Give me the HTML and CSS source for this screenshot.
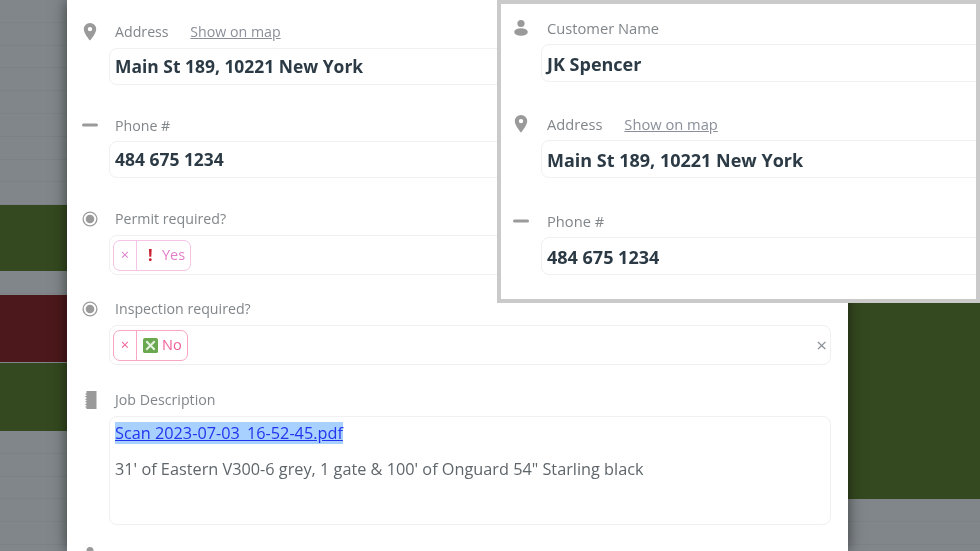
FILE: index.html
```html
<!DOCTYPE html>
<html lang="en">
<head>
<meta charset="utf-8">
<title>Job details</title>
<link rel="stylesheet" href="styles.css">
</head>
<body>
<div class="stage">
  <div class="backdrop">
    <div class="col col-left">
      <div class="stripes s205"></div>
      <div class="band green h66"></div>
      <div class="stripes h24"></div>
      <div class="band red h67"></div>
      <div class="gap1"></div>
      <div class="band green h68"></div>
      <div class="stripes grow"></div>
    </div>
    <div class="col col-right">
      <div class="stripes s205"></div>
      <div class="band green h294"></div>
      <div class="stripes grow"></div>
    </div>
  </div>

  <section class="modal">
    <div class="field f-address">
      <svg class="icon" viewBox="0 0 16 20"><path fill-rule="evenodd" d="M8 1a6.2 6.2 0 0 0-6.2 6.2C1.800 11.500 8 18.500 8 18.500s6.200-7 6.200-11.300A6.200 6.200 0 0 0 8 1zm0 8.300a2.200 2.200 0 1 1 0-4.400 2.200 2.200 0 0 1 0 4.400z"/></svg>
      <div class="body">
        <div class="label">Address <a class="maplink">Show on map</a></div>
        <div class="box value">Main St 189, 10221 New York</div>
      </div>
    </div>
    <div class="field f-phone">
      <svg class="icon" viewBox="0 0 16 20"><rect x="0" y="8.500" width="16" height="3" rx="1.500"/></svg>
      <div class="body">
        <div class="label">Phone #</div>
        <div class="box value">484 675 1234</div>
      </div>
    </div>
    <div class="field f-permit">
      <svg class="icon" viewBox="0 0 16 16"><circle cx="8" cy="8" r="6.900" fill="none" stroke="#9a9a9a" stroke-width="1.300"/><circle cx="8" cy="8" r="4.300"/></svg>
      <div class="body">
        <div class="label">Permit required?</div>
        <div class="box tagbox">
          <span class="tag tag-yes"><span class="tag-x">×</span><span class="tag-text"><b class="bang">!</b>Yes</span></span>
        </div>
      </div>
    </div>
    <div class="field f-inspect">
      <svg class="icon" viewBox="0 0 16 16"><circle cx="8" cy="8" r="6.900" fill="none" stroke="#9a9a9a" stroke-width="1.300"/><circle cx="8" cy="8" r="4.300"/></svg>
      <div class="body">
        <div class="label">Inspection required?</div>
        <div class="box tagbox">
          <span class="tag tag-no"><span class="tag-x">×</span><span class="tag-text"><svg class="nomark" viewBox="0 0 16 16"><rect width="16" height="16" rx="2" fill="#6aa84f"/><path d="M3.500 3.500l9 9M12.500 3.500l-9 9" stroke="#e8f2e2" stroke-width="2.200"/></svg>No</span></span>
          <span class="clear">×</span>
        </div>
      </div>
    </div>
    <div class="field f-desc">
      <svg class="icon icon-desc" viewBox="0 0 12 18"><path d="M2 0h10v18H2v-1.200L.3 16 2 15.200v-1L.3 13.400 2 12.600v-1L.3 10.800 2 10V9L.3 8.200 2 7.400v-1L.3 5.600 2 4.800v-1L.3 3 2 2.200z"/></svg>
      <div class="body">
        <div class="label">Job Description</div>
        <div class="box descbox">
          <p class="scan"><a class="scanlink">Scan 2023-07-03_16-52-45.pdf</a></p>
          <p class="desc">31' of Eastern V300-6 grey, 1 gate &amp; 100' of Onguard 54" Starling black</p>
        </div>
      </div>
    </div>
    <svg class="icon icon-next" viewBox="0 0 16 20"><path d="M8 1a3.500 3.500 0 0 0-3.500 3.500V7h7V4.500A3.500 3.500 0 0 0 8 1z"/></svg>
  </section>

  <aside class="inset">
    <div class="ifield if-name">
      <svg class="icon" viewBox="0 0 16 18"><circle cx="8" cy="4.500" r="3.600"/><ellipse cx="8" cy="13" rx="6.800" ry="3.800"/></svg>
      <div class="body">
        <div class="label">Customer Name</div>
        <div class="box value">JK Spencer</div>
      </div>
    </div>
    <div class="ifield if-address">
      <svg class="icon" viewBox="0 0 16 20"><path fill-rule="evenodd" d="M8 1a6.200 6.200 0 0 0-6.200 6.200C1.800 11.500 8 18.500 8 18.500s6.200-7 6.200-11.300A6.200 6.200 0 0 0 8 1zm0 8.300a2.200 2.200 0 1 1 0-4.400 2.200 2.200 0 0 1 0 4.400z"/></svg>
      <div class="body">
        <div class="label">Address <a class="maplink">Show on map</a></div>
        <div class="box value">Main St 189, 10221 New York</div>
      </div>
    </div>
    <div class="ifield if-phone">
      <svg class="icon" viewBox="0 0 16 20"><rect x="0" y="8.500" width="16" height="3" rx="1.500"/></svg>
      <div class="body">
        <div class="label">Phone #</div>
        <div class="box value">484 675 1234</div>
      </div>
    </div>
  </aside>
</div>
</body>
</html>
```
FILE: styles.css
```css
* { box-sizing: border-box; }
html, body { margin: 0; padding: 0; }
body { width: 980px; height: 551px; overflow: hidden; background: #fff; font-family: "Open Sans", sans-serif; }
.stage { position: relative; width: 980px; height: 551px; overflow: hidden; filter: blur(0.45px); }

/* Dimmed table behind the modal */
.backdrop { display: flex; justify-content: space-between; height: 551px; background: #80868a; }
.col { display: flex; flex-direction: column; height: 551px; }
.col-left { width: 67px; }
.col-right { width: 132px; }
.stripes { background: repeating-linear-gradient(to bottom, #80868a 0, #80868a 21.800px, #7b8185 21.800px, #7b8185 22.800px); }
.s205 { height: 205px; }
.h24 { height: 24px; }
.grow { flex: 1; }
.green { background: #34491f; }
.red { background: #4c181b; }
.h66 { height: 66px; }
.h67 { height: 67px; }
.h68 { height: 68px; }
.h294 { height: 294px; }
.gap1 { height: 1px; background: #80868a; }

/* Modal */
.modal { position: absolute; left: 67px; top: 0; width: 781px; height: 551px; background: #fff; box-shadow: 0 0 14px rgba(0, 0, 0, .55); padding: 22px 17px 0 0; }
.field, .ifield { display: flex; }
.icon { flex: none; fill: #9a9a9a; }
.body { flex: 1; min-width: 0; }
.label { color: #80868a; font-size: 14.200px; line-height: 20px; padding-left: 6px; }
.maplink { color: #8a8f99; text-decoration: underline; margin-left: 18px; }
.box { border: 1px solid #f0f0f0; border-radius: 8px; background: #fff; margin-top: 6px; }
.value { color: #2b3a44; font-weight: 700; font-size: 17.450px; height: 37px; line-height: 35px; padding-left: 5px; }

.modal .field { padding-left: 15px; }
.modal .field .icon { width: 16px; height: 20px; margin-right: 11px; }
.f-phone { margin-top: 30px; }
.f-phone .label { padding-top: 1px; line-height: 20px; height: 21px; }
.f-phone .box { margin-top: 5px; }
.f-permit { margin-top: 31px; }
.f-inspect { margin-top: 24px; }
.f-desc { margin-top: 25px; }
.modal .f-permit .icon, .modal .f-inspect .icon { height: 16px; margin-top: 2px; }
.modal .f-desc .icon-desc { width: 13px; height: 18px; margin: 1px 12px 0 2px; }

.tagbox { position: relative; height: 40px; padding: 3px; display: flex; align-items: center; }
.tag { display: inline-flex; height: 31px; border-radius: 7px; border: 1.500px solid; font-size: 14.500px; line-height: 28px; }
.tag-x { width: 23px; text-align: center; border-right: 1.500px solid; border-color: inherit; }
.tag-text { display: flex; align-items: center; }
.tag-yes { border-color: #f5c3e6; color: #e27fca; }
.tag-yes .tag-text { padding: 0 5px 0 11px; }
.bang { color: #c8202f; font-weight: 700; width: 14px; font-size: 16px; }
.tag-no { border-color: #f8a6c4; color: #ef5f98; }
.tag-no .tag-text { padding: 0 5px 0 6px; }
.nomark { width: 15px; height: 15px; margin-right: 4px; }
.clear { position: absolute; right: 3px; top: 4px; color: #8a9096; font-size: 19px; line-height: 30px; }

.descbox { height: 109px; padding: 4px 5px; font-size: 16.280px; line-height: 24px; }
.descbox p { margin: 0; }
.scanlink { background: #a8d1ff; color: #2434ee; text-decoration: underline; }
.desc { color: #5f666b; margin-top: 12px !important; }
.icon-next { position: absolute; left: 15px; top: 546px; width: 16px; height: 20px; }

/* Zoomed inset */
.inset { position: absolute; left: 497px; top: 0; width: 483px; height: 303px; background: #fff; border: 4px solid #cacaca; padding: 14px 0 0 12px; overflow: hidden; }
.ifield .icon { width: 16px; height: 20px; margin-right: 12px; }
.inset .label { font-size: 14.700px; line-height: 21px; }
.inset .box { margin-top: 5px; margin-right: -30px; }
.inset .value { font-size: 18px; height: 38px; line-height: 38px; }
.inset .maplink { margin-left: 18px; }
.if-address { margin-top: 32px; }
.if-phone { margin-top: 33px; }
```
